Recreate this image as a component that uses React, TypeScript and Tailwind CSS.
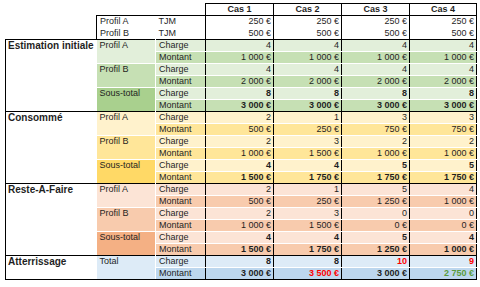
import React from "react";

type Group = {
  name: string;
  bg: string;
  bold?: boolean;
  charge: string[];
  montant: string[];
  chargeColors?: string[];
  montantColors?: string[];
};

type Section = {
  label: string;
  light: string;
  mid: string;
  groups: Group[];
};

const sections: Section[] = [
  {
    label: "Estimation initiale",
    light: "bg-[#e2efda]",
    mid: "bg-[#c6e0b4]",
    groups: [
      { name: "Profil A", bg: "bg-[#e2efda]", charge: ["4", "4", "4", "4"], montant: ["1 000 €", "1 000 €", "1 000 €", "1 000 €"] },
      { name: "Profil B", bg: "bg-[#c6e0b4]", charge: ["4", "4", "4", "4"], montant: ["2 000 €", "2 000 €", "2 000 €", "2 000 €"] },
      { name: "Sous-total", bg: "bg-[#a9d08e]", bold: true, charge: ["8", "8", "8", "8"], montant: ["3 000 €", "3 000 €", "3 000 €", "3 000 €"] },
    ],
  },
  {
    label: "Consommé",
    light: "bg-[#fff2cc]",
    mid: "bg-[#ffe699]",
    groups: [
      { name: "Profil A", bg: "bg-[#fff2cc]", charge: ["2", "1", "3", "3"], montant: ["500 €", "250 €", "750 €", "750 €"] },
      { name: "Profil B", bg: "bg-[#ffe699]", charge: ["2", "3", "2", "2"], montant: ["1 000 €", "1 500 €", "1 000 €", "1 000 €"] },
      { name: "Sous-total", bg: "bg-[#ffd966]", bold: true, charge: ["4", "4", "5", "5"], montant: ["1 500 €", "1 750 €", "1 750 €", "1 750 €"] },
    ],
  },
  {
    label: "Reste-A-Faire",
    light: "bg-[#fce4d6]",
    mid: "bg-[#f8cbad]",
    groups: [
      { name: "Profil A", bg: "bg-[#fce4d6]", charge: ["2", "1", "5", "4"], montant: ["500 €", "250 €", "1 250 €", "1 000 €"] },
      { name: "Profil B", bg: "bg-[#f8cbad]", charge: ["2", "3", "0", "0"], montant: ["1 000 €", "1 500 €", "0 €", "0 €"] },
      { name: "Sous-total", bg: "bg-[#f4b084]", bold: true, charge: ["4", "4", "5", "4"], montant: ["1 500 €", "1 750 €", "1 250 €", "1 000 €"] },
    ],
  },
  {
    label: "Atterrissage",
    light: "bg-[#ddebf7]",
    mid: "bg-[#bdd7ee]",
    groups: [
      {
        name: "Total",
        bg: "bg-[#ddebf7]",
        bold: true,
        charge: ["8", "8", "10", "9"],
        montant: ["3 000 €", "3 500 €", "3 000 €", "2 750 €"],
        chargeColors: ["", "", "text-[#ff0000]", "text-[#ff0000]"],
        montantColors: ["", "text-[#ff0000]", "", "text-[#5b9b3d]"],
      },
    ],
  },
];

const cas = ["Cas 1", "Cas 2", "Cas 3", "Cas 4"];

const App = () => {
  return (
    <div className="w-[480px] h-[287px] bg-white pl-[5px] pt-[3px] font-['Liberation_Sans',Arial,sans-serif] text-[9px] text-[#1f1f1f]">
      <table className="table-fixed border-collapse w-[471px] leading-[11px]">
        <colgroup>
          <col className="w-[91px]" />
          <col className="w-[59px]" />
          <col className="w-[50px]" />
          <col className="w-[68px]" />
          <col className="w-[68px]" />
          <col className="w-[68px]" />
          <col className="w-[67px]" />
        </colgroup>
        <tbody>
          <tr className="h-[12px]">
            <td className="p-0" />
            <td className="p-0" />
            <td className="p-0" />
            {cas.map((c) => (
              <td key={c} className="p-0 border border-black text-center font-bold">
                {c}
              </td>
            ))}
          </tr>
          {["Profil A", "Profil B"].map((p, i) => (
            <tr key={p} className="h-[12px]">
              <td className="p-0" />
              <td className={`p-0 pl-[3px] border-l border-black ${i === 0 ? "border-t" : ""}`}>{p}</td>
              <td className={`p-0 pl-[3px] border-black ${i === 0 ? "border-t" : ""}`}>TJM</td>
              {cas.map((c) => (
                <td key={c} className="p-0 pr-[2px] text-right border-x border-black">
                  {i === 0 ? "250 €" : "500 €"}
                </td>
              ))}
            </tr>
          ))}
          {sections.map((s, si) => {
            const rowCount = s.groups.length * 2;
            const lastSection = si === sections.length - 1;
            return s.groups.flatMap((g, gi) => {
              const lastGroup = gi === s.groups.length - 1;
              const firstRow = gi === 0;
              const top = firstRow ? "border-t border-t-black" : "";
              const sep = "border-b border-b-white";
              const bottom = lastGroup && lastSection ? "border-b border-b-black" : lastGroup ? "" : sep;
              return [
                <tr key={`${s.label}-${g.name}-c`} className="h-[12px]">
                  {firstRow && (
                    <td
                      rowSpan={rowCount}
                      className={`p-0 pl-[2px] align-top bg-white border-l border-l-black border-t border-t-black font-bold text-[10px] ${lastSection ? "border-b border-b-black" : ""}`}
                    >
                      {s.label}
                    </td>
                  )}
                  <td rowSpan={2} className={`p-0 pl-[3px] align-top border-r border-r-white ${g.bg} ${top} ${bottom}`}>
                    {g.name}
                  </td>
                  <td className={`p-0 pl-[3px] ${s.light} ${top} ${sep}`}>Charge</td>
                  {g.charge.map((v, ci) => (
                    <td
                      key={ci}
                      className={`p-0 pr-[2px] text-right border-x border-x-black ${s.light} ${top} ${sep} ${g.bold ? "font-bold" : ""} ${g.chargeColors?.[ci] ?? ""}`}
                    >
                      {v}
                    </td>
                  ))}
                </tr>,
                <tr key={`${s.label}-${g.name}-m`} className="h-[12px]">
                  <td className={`p-0 pl-[3px] ${s.mid} ${bottom}`}>Montant</td>
                  {g.montant.map((v, ci) => (
                    <td
                      key={ci}
                      className={`p-0 pr-[2px] text-right border-x border-x-black ${s.mid} ${bottom} ${g.bold ? "font-bold" : ""} ${g.montantColors?.[ci] ?? ""}`}
                    >
                      {v}
                    </td>
                  ))}
                </tr>,
              ];
            });
          })}
        </tbody>
      </table>
    </div>
  );
};

export default App;
